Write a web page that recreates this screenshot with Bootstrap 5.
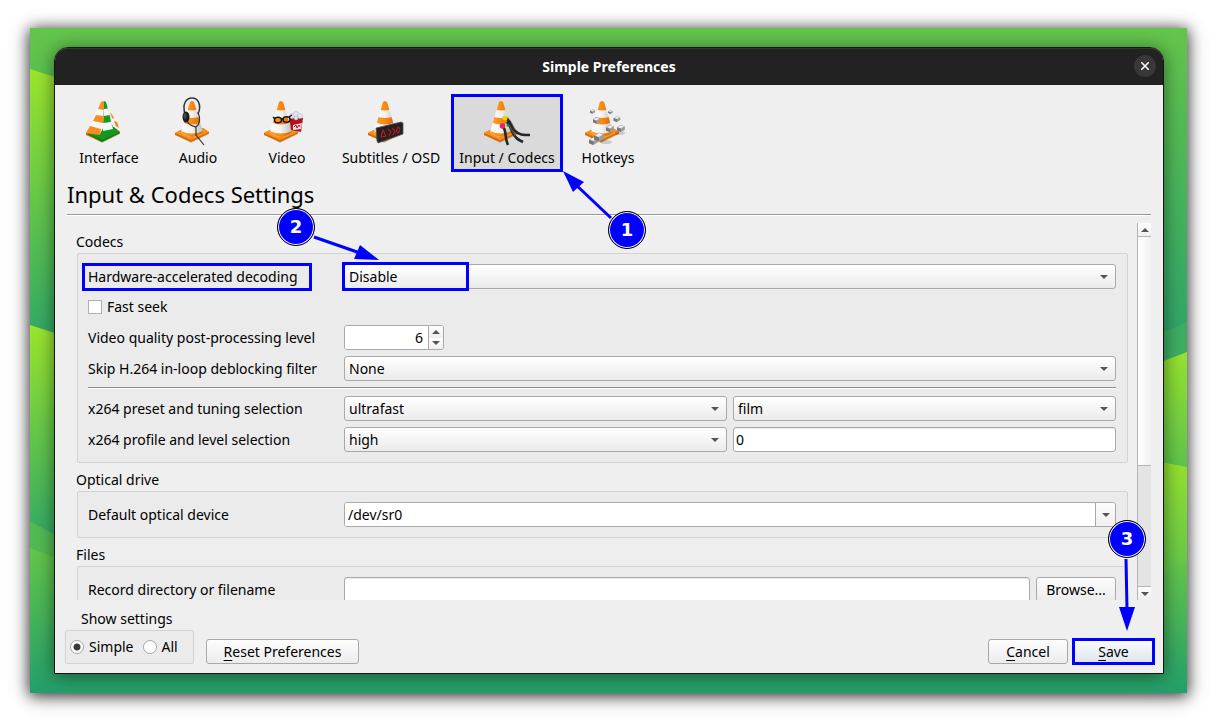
<!DOCTYPE html>
<html lang="en">
<head>
<meta charset="utf-8">
<meta name="viewport" content="width=device-width, initial-scale=1">
<title>Simple Preferences</title>
<link href="https://cdn.jsdelivr.net/npm/bootstrap@5.3.0/dist/css/bootstrap.min.css" rel="stylesheet">
<style>
  :root { --mark: #00f; --line: #a9a9a9; --win: #efefef; }
  body { font-family: "Noto Sans", "Open Sans", sans-serif; font-size: 14px; line-height: 20px; color: #000; background: #fff; padding: 28px 30px 32px; }
  .desktop { padding: 19px 23px 19px 24px; background: #2b9f69; box-shadow: 0 2px 14px 1px rgba(0,0,0,.75), 0 4px 24px rgba(0,0,0,.15); isolation: isolate; }
  .wallpaper { z-index: -1; }
  .window { background: var(--win); border: 1px solid #101810; border-radius: 14px 14px 0 0; box-shadow: 0 2px 18px rgba(0,0,0,.5); }
  .titlebar { height: 37px; background: #222; color: #fff; border-radius: 13px 13px 0 0; box-shadow: inset 0 1px #353535; }
  .close-btn { width: 22px; height: 22px; right: 7px; top: 7px; background: #383838; color: #fff; border: 0; }

  .toolbar { padding: 9px 10px 0; gap: 1px; }
  .tool { min-width: 88px; height: 78px; padding: 4px 6px 0; border: 0; background: none; color: #000; white-space: nowrap; display: flex; flex-direction: column; align-items: center; }
  .tool-subs { min-width: 118px; }
  .tool-input { min-width: 112px; }
  .tool-icon { display: block; width: 48px; height: 48px; margin: 0 auto 2px; overflow: visible; }
  .tool.active { background: #dadada; outline: 3px solid var(--mark); outline-offset: -3px; }

  .page-title { font-size: 22px; line-height: 30px; margin: 7px 12px 0; padding-bottom: 5px; border-bottom: 1px solid #989898; box-shadow: 0 1px #fff; font-weight: 400; }
  .view { margin: 8px 12px 0; }
  .viewport { height: 377px; overflow: hidden; padding: 2px 9px 0 10px; }
  .group-label { font-size: 14px; line-height: 22px; padding-top: 6px; margin: 0 0 0 -1px; font-weight: 400; }
  .group-box { background: #ebebeb; border: 1px solid #d3d3d3; border-radius: 2px; padding: 10px 11px 10px 10px; }
  .form-rows { display: grid; grid-template-columns: 250px 1fr 1fr; column-gap: 6px; row-gap: 6px; align-items: center; }
  .form-rows label { white-space: nowrap; }
  .span-2 { grid-column: span 2; }
  .span-3 { grid-column: span 3; }
  .tick-row { height: 24px; gap: 5px; }
  .rule { height: 3px; border-top: 1px solid #8f8f8f; box-shadow: inset 0 1px #fff; }

  .field, .combo, .push { height: 25px; border: 1px solid var(--line); border-radius: 3px; color: #000; font-size: 14px; line-height: 20px; min-width: 0; }
  .field { background: #fff; padding: 0 2px; box-shadow: inset 0 1px #ececec; }
  .combo { width: 100%; appearance: none; padding: 0 24px 0 4px; background: url("data:image/svg+xml,%3Csvg xmlns='http://www.w3.org/2000/svg' viewBox='0 0 8 4'%3E%3Cpath d='M0 0h8L4 4z' fill='%23555'/%3E%3C/svg%3E") right 7px center / 8px 4px no-repeat, linear-gradient(#fff, #ebebeb); }
  .push { background: linear-gradient(#fdfdfd, #ececec); padding: 0 13px; }
  .push u { text-underline-offset: 3px; }
  .arrow-btn { border: 0; background: linear-gradient(#fdfdfd, #efefef); padding: 0; display: flex; align-items: center; justify-content: center; }
  .arrow-btn svg { width: 8px; height: 4px; fill: #555; }
  .spin { width: 100px; height: 25px; border: 1px solid var(--line); border-radius: 3px; background: #fff; overflow: hidden; }
  .spin input, .edit-combo input { border: 0; min-width: 0; background: #fff; font-size: 14px; padding: 0 3px; color: #000; }
  .spin input { appearance: textfield; text-align: right; padding-right: 5px; }
  .spin input::-webkit-inner-spin-button { appearance: none; }
  .spin-arrows { flex: 0 0 15px; border-left: 1px solid var(--line); }
  .edit-combo { height: 25px; border: 1px solid var(--line); border-radius: 3px; overflow: hidden; }
  .edit-combo .arrow-btn { width: 20px; border-left: 1px solid var(--line); }
  .row-pair { gap: 6px; }
  .tick { appearance: none; width: 14px; height: 14px; margin: 0; background: #fff; border: 1px solid #b0b0b0; }
  .dot { appearance: none; width: 14px; height: 14px; margin: 0; background: #fff; border: 1px solid #a5a5a5; border-radius: 50%; }
  .dot:checked { background: radial-gradient(circle, #3a3a3a 3px, #fff 4px); }

  .scroller { width: 14px; height: 377px; border-left: 1px solid #b5b5b5; background: #e4e4e4; }
  .scroller .arrow-btn { height: 13px; }
  .thumb { height: 230px; background: linear-gradient(90deg, #fff, #f1f1f1); border: solid #b5b5b5; border-width: 1px 0; }
  .trough { border-bottom: 1px solid #b5b5b5; }

  .footer-bar { padding: 8px 8px 9px 10px; }
  .mode-label { line-height: 22px; padding-left: 16px; }
  .mode-box { width: 129px; height: 34px; padding: 0 4px; gap: 5px; border: 1px solid #d3d3d3; border-radius: 2px; background: #ebebeb; }
  .reset { margin-left: 12px; width: 153px; }
  .narrow { width: 80px; padding: 0; }
  .actions { margin-bottom: -1px; }
  .save { width: 83px; height: 27px; border: 3px solid var(--mark); border-radius: 0; background: linear-gradient(#fafcfd, #dfe6ea); padding: 0; }

  /* annotations lying over the window */
  .ring { border: 3px solid var(--mark); pointer-events: none; z-index: 2; }
  .ring-label { inset: -4px auto auto -6px; width: 230px; height: 28px; }
  .ring-value { left: -2px; top: -2px; width: 127px; height: 29px; }
  .callout { z-index: 3; pointer-events: none; }
  .callout svg { display: block; overflow: visible; stroke: var(--mark); fill: var(--mark); }
  .step-no { width: 38px; height: 38px; border: 1px solid #000; border-radius: 50%; background: var(--mark); color: #fff; box-shadow: inset 0 0 0 1px #fff; font: bold 18px/36px "DejaVu Sans", sans-serif; text-align: center; }
  .callout-1 { left: 100%; top: 100%; width: 84px; height: 77px; }
  .callout-1 .step-no { right: 1px; bottom: 0; }
  .callout-2 { left: 210px; top: -15px; width: 106px; height: 54px; }
  .callout-2 .step-no { left: 0; top: 0; }
  .callout-3 { right: 6px; bottom: 100%; width: 38px; height: 121px; }
  .callout-3 .step-no { left: 0; top: 0; }
</style>
</head>
<body>
<svg width="0" height="0" class="position-absolute" aria-hidden="true">
  <defs>
    <linearGradient id="or" x1="0" x2="1"><stop offset="0" stop-color="#ffa63c"/><stop offset=".5" stop-color="#f88a12"/><stop offset="1" stop-color="#d06200"/></linearGradient>
    <linearGradient id="wh" x1="0" x2="1"><stop offset="0" stop-color="#fff"/><stop offset=".5" stop-color="#f2f2f2"/><stop offset="1" stop-color="#b9b9b9"/></linearGradient>
    <clipPath id="body"><path d="M16 4q2-2 4 0l9 30q-5 5-11 5t-11-5z"/></clipPath>
    <symbol id="cone" viewBox="0 0 48 48">
      <path d="M2 37l15 8 18-9-17-4z" fill="#000" opacity=".2"/>
      <path d="M1 35l8-4 20-1 6 4v1.500L17 44 1 37z" fill="#d86a00"/>
      <path d="M1 35l8-4 20-1 6 4-18 8z" fill="#fb8f1a"/>
      <g clip-path="url(#body)">
        <path d="M6 0h24v40H6z" fill="url(#wh)"/>
        <path d="M12 0h12v11q-6 3-12 0zM8 18q10 4 20 0v6q-10 5-20 0zM5 32q13 7 26 0v9H5z" fill="url(#or)"/>
      </g>
    </symbol>
    <symbol id="key" viewBox="0 0 10 9">
      <path d="M0 3l5-3 5 2v4L5 9 0 7z" fill="#9c9c9c"/><path d="M0 3l5 2v4L0 7z" fill="#777"/><path d="M1 3l4-2.500L9 2 5 4.500z" fill="#eee"/>
    </symbol>
    <symbol id="down" viewBox="0 0 8 4"><path d="M0 0h8L4 4z"/></symbol>
    <symbol id="up" viewBox="0 0 8 4"><path d="M0 4h8L4 0z"/></symbol>
  </defs>
</svg>

<div class="desktop position-relative">
  <svg class="wallpaper position-absolute top-0 start-0 w-100 h-100" viewBox="0 0 1157 665" preserveAspectRatio="none" aria-hidden="true">
    <defs>
      <linearGradient id="a" x2="0" y2="1"><stop stop-color="#64c54b"/><stop offset="1" stop-color="#2fa56a"/></linearGradient>
      <linearGradient id="b" x2="0" y2="1"><stop stop-color="#9ce52c"/><stop offset=".5" stop-color="#64c64a"/><stop offset="1" stop-color="#2fa768"/></linearGradient>
      <linearGradient id="c" x2="0" y2="1"><stop stop-color="#64c64a"/><stop offset="1" stop-color="#239f6b"/></linearGradient>
      <linearGradient id="d" x2="0" y2="1"><stop stop-color="#96e22e"/><stop offset="1" stop-color="#5cc24d"/></linearGradient>
    </defs>
    <path d="M0 0h1157v310H0z" fill="url(#a)"/>
    <path d="M0 41l40 13v260H0z" fill="url(#b)"/>
    <path d="M0 297l40 13v210H0z" fill="url(#b)"/>
    <path d="M0 493l40 22v60H0z" fill="#52ba52"/>
    <path d="M0 520l60 24h1097v121H0z" fill="url(#c)"/>
    <path d="M1100 318l57-24v50h-57z" fill="#3dae61"/>
    <path d="M1100 346l57-22v120h-57z" fill="url(#d)"/>
    <path d="M1100 428l57 11v120h-57z" fill="url(#d)"/>
    <path d="M1100 555l57-22v132h-57z" fill="url(#c)"/>
  </svg>

  <main class="window">
    <header class="titlebar position-relative d-flex align-items-center justify-content-center">
      <span class="fw-bold">Simple Preferences</span>
      <button type="button" class="close-btn position-absolute rounded-circle p-0 d-flex align-items-center justify-content-center" aria-label="Close">
        <svg width="8" height="8" viewBox="0 0 8 8" stroke="currentColor" stroke-width="1.500"><path d="M0 0l8 8M8 0L0 8"/></svg>
      </button>
    </header>

    <nav class="toolbar d-flex">
      <button type="button" class="tool">
        <svg class="tool-icon" viewBox="0 0 48 48"><use href="#cone" width="48" height="48"/>
          <path d="M2 36l14-5 13-1 6 5-18 9z" fill="#0a7d10"/><path d="M2 35l14-5 13-1 6 5-18 8z" fill="#14971b"/>
          <path d="M19 3l2 1 8 29q-4 5-12 5z" fill="#129a1c"/>
          <path d="M19 11l4-.5 2 6.500-6 1zM18 25l8-1 2 7-10 2z" fill="#f6f6f6"/>
          <path d="M16 4l3-1-1 27-3 6-14-2z" fill="#f6f6f6"/>
          <path d="M16 4l3-1v9l-6-1zM11 17l8 1-1 7-10-2zM5 28l11 3-1 6-14-2z" fill="#f98e1e"/>
          <path d="M25 14l4 6 5 9-8-3z" fill="#f4f4f4"/><path d="M25 14l3 4 1 3-2-1zM29 23l3 1 2 6-3-2z" fill="#ee8020"/>
        </svg>Interface</button>
      <button type="button" class="tool">
        <svg class="tool-icon" viewBox="0 0 48 48"><use href="#cone" width="48" height="48"/>
          <g fill="none" stroke="#333" stroke-width="1.500"><path d="M11 16C8 6 12 0 18 0s10 7 6 16"/><path d="M13 20c-1 7 6 8 9 9M24 14c3 8 1 13-2 15v8l8 10" stroke-width="1.200"/></g>
          <ellipse cx="12" cy="19" rx="3.500" ry="5.500" fill="#1c1c1c"/><ellipse cx="11" cy="18" rx="1.500" ry="3" fill="#444"/>
        </svg>Audio</button>
      <button type="button" class="tool">
        <svg class="tool-icon" viewBox="0 0 48 48"><use href="#cone" width="48" height="48"/>
          <path d="M26 19l14 1-2 14-10-2z" fill="#b3121b"/><path d="M30 27l9-2-1 6-8 1z" fill="#f4dede"/><path d="M31 29l2-2 1 3 2-3 1 2" stroke="#b3121b" fill="none"/>
          <g fill="#e4e8f2" stroke="#a7aebf" stroke-width=".5"><circle cx="29" cy="18" r="2.500"/><circle cx="33" cy="16" r="2.500"/><circle cx="37" cy="18" r="2.500"/><circle cx="33" cy="20" r="2"/></g>
          <g fill="none" stroke="#171717" stroke-width="1.500"><ellipse cx="15" cy="22" rx="3.500" ry="2.800"/><ellipse cx="23.500" cy="21.500" rx="3.500" ry="2.800"/><path d="M10 19l2 2M18.500 21.500l1.500-.5M26 19l3-2"/></g>
        </svg>Video</button>
      <button type="button" class="tool tool-subs">
        <svg class="tool-icon" viewBox="0 0 48 48"><use href="#cone" width="48" height="48"/>
          <path d="M9 30l25-6 2 1v11l-25 9-1-2z" fill="#222" stroke="#555" stroke-width=".8"/>
          <path d="M14 39l2-7 3 6-5 1M21 31l3 3-2 4M25 30l3 3-2 4M31 29q4 2 0 6-3-2 0-6" fill="none" stroke="#c5161e" stroke-width="1.100"/>
        </svg>Subtitles / OSD</button>
      <button type="button" class="tool tool-input active position-relative">
        <svg class="tool-icon" viewBox="0 0 48 48"><use href="#cone" width="48" height="48"/>
          <g fill="none" stroke="#262626" stroke-width="2.600"><path d="M23 20c6 4 5 9 9 13s8 4 15 4"/><path d="M24 24c4 3 4 9 7 13 3 5 5 5 9 7"/><path d="M20 29c4 4 1 10 5 18"/></g>
          <g fill="none" stroke="#888" stroke-width=".6"><path d="M26 21c4 4 4 8 7 11M26 27c3 4 4 8 6 11"/></g>
          <circle cx="22" cy="20" r="2.500" fill="#e5d800"/><circle cx="19.500" cy="28" r="2.800" fill="#e6255f"/><circle cx="25" cy="27" r="1.500" fill="#237b2b"/>
        </svg>Input / Codecs
        <span class="callout callout-1 position-absolute">
          <svg width="84" height="77" viewBox="0 0 84 77"><path d="M11 11l37 35" stroke-width="3"/><path d="M0-1l21 11-11 10z" stroke="none"/></svg>
          <span class="step-no position-absolute">1</span>
        </span>
      </button>
      <button type="button" class="tool">
        <svg class="tool-icon" viewBox="0 0 48 48"><use href="#cone" width="48" height="48"/>
          <ellipse cx="36" cy="35" rx="5" ry="2" opacity=".15"/><ellipse cx="22" cy="44" rx="6" ry="2" opacity=".15"/>
          <use href="#key" x="6" y="11" width="5" height="5"/><use href="#key" x="9" y="19" width="7" height="7"/><use href="#key" x="24" y="12" width="5" height="4"/><use href="#key" x="29" y="18" width="8" height="6"/>
          <use href="#key" x="22" y="27" width="8" height="7"/><use href="#key" x="32" y="27" width="10" height="7"/><use href="#key" x="5" y="39" width="9" height="8"/><use href="#key" x="10" y="34" width="10" height="10"/>
        </svg>Hotkeys</button>
    </nav>

    <h1 class="page-title">Input &amp; Codecs Settings</h1>

    <div class="view position-relative d-flex">
      <div class="viewport flex-grow-1">
        <h2 class="group-label">Codecs</h2>
        <section class="group-box">
          <div class="form-rows">
            <div class="position-relative"><label for="hw">Hardware-accelerated decoding</label><span class="ring ring-label position-absolute"></span></div>
            <div class="span-2 position-relative d-flex"><select id="hw" class="combo"><option>Disable</option></select><span class="ring ring-value position-absolute"></span></div>

            <div class="span-3 tick-row d-flex align-items-center"><input type="checkbox" class="tick" id="seek"><label for="seek">Fast seek</label></div>

            <label for="pp">Video quality post-processing level</label>
            <div class="span-2"><div class="spin d-flex">
              <input type="number" id="pp" value="6" class="flex-grow-1">
              <div class="spin-arrows d-flex flex-column">
                <button type="button" class="arrow-btn flex-fill" aria-label="Increase"><svg><use href="#up"/></svg></button>
                <button type="button" class="arrow-btn flex-fill" aria-label="Decrease"><svg><use href="#down"/></svg></button>
              </div>
            </div></div>

            <label for="skip">Skip H.264 in-loop deblocking filter</label>
            <select id="skip" class="combo span-2"><option>None</option></select>

            <div class="rule span-3"></div>

            <label for="preset">x264 preset and tuning selection</label>
            <select id="preset" class="combo"><option>ultrafast</option></select>
            <select class="combo" aria-label="Tuning"><option>film</option></select>

            <label for="profile">x264 profile and level selection</label>
            <select id="profile" class="combo"><option>high</option></select>
            <input type="text" class="field w-100" value="0" aria-label="Level">
          </div>
        </section>

        <h2 class="group-label">Optical drive</h2>
        <section class="group-box">
          <div class="form-rows">
            <label for="dev">Default optical device</label>
            <div class="span-2 edit-combo d-flex"><input type="text" id="dev" class="flex-grow-1" value="/dev/sr0"><button type="button" class="arrow-btn" aria-label="Choose device"><svg><use href="#down"/></svg></button></div>
          </div>
        </section>

        <h2 class="group-label">Files</h2>
        <section class="group-box">
          <div class="form-rows">
            <label for="rec">Record directory or filename</label>
            <div class="span-2 row-pair d-flex"><input type="text" id="rec" class="field flex-grow-1"><button type="button" class="push narrow">Browse...</button></div>
          </div>
        </section>
      </div>

      <div class="scroller d-flex flex-column" aria-hidden="true">
        <div class="arrow-btn"><svg><use href="#up"/></svg></div>
        <div class="thumb"></div>
        <div class="trough flex-grow-1"></div>
        <div class="arrow-btn"><svg><use href="#down"/></svg></div>
      </div>

      <span class="callout callout-2 position-absolute">
        <svg width="106" height="54" viewBox="0 0 106 54"><path d="M37 29l46 16" stroke-width="3"/><path d="M102 52l-25-1 6-14z" stroke="none"/></svg>
        <span class="step-no position-absolute">2</span>
      </span>
    </div>

    <footer class="footer-bar d-flex align-items-end">
      <div>
        <div class="mode-label">Show settings</div>
        <div class="mode-box d-flex align-items-center" role="radiogroup" aria-label="Show settings">
          <input type="radio" class="dot" name="mode" id="simple" checked><label for="simple" class="me-1">Simple</label>
          <input type="radio" class="dot" name="mode" id="all"><label for="all">All</label>
        </div>
      </div>
      <button type="button" class="push reset"><u>R</u>eset Preferences</button>
      <div class="actions d-flex align-items-center gap-1 ms-auto">
        <button type="button" class="push narrow"><u>C</u>ancel</button>
        <button type="submit" class="push save position-relative"><u>S</u>ave
          <span class="callout callout-3 position-absolute">
            <svg width="38" height="121" viewBox="0 0 38 121"><path d="M18 39l1 50" stroke-width="3"/><path d="M11 87h16l-8 24z" stroke="none"/></svg>
            <span class="step-no position-absolute">3</span>
          </span>
        </button>
      </div>
    </footer>
  </main>
</div>
<script src="https://cdn.jsdelivr.net/npm/bootstrap@5.3.0/dist/js/bootstrap.bundle.min.js"></script>
</body>
</html>
